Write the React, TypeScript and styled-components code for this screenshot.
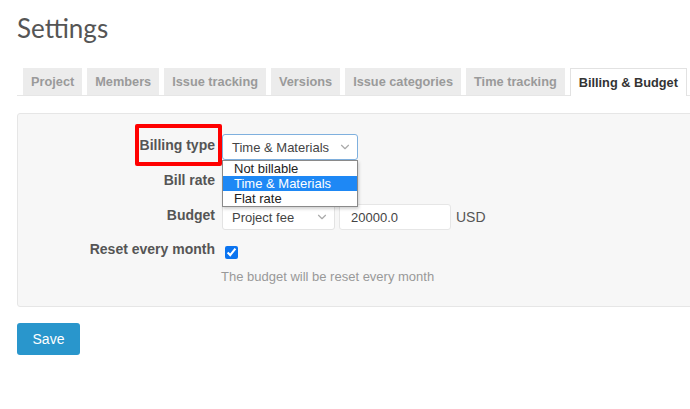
import React from 'react';
import styled, { createGlobalStyle } from 'styled-components';
import { ChevronDown } from 'lucide-react';

const GlobalStyle = createGlobalStyle`
  html, body {
    margin: 0;
    padding: 0;
    overflow: hidden;
    background: #fff;
    font-family: "Liberation Sans", Arial, sans-serif;
  }
`;

const Page = styled.div`
  width: 690px;
  padding-left: 17px;
  box-sizing: border-box;
  overflow: hidden;
`;

const Title = styled.h2`
  margin: 12px 0 24px 0;
  font-family: Lato, "Open Sans", sans-serif;
  font-weight: 400;
  font-size: 26px;
  line-height: 32px;
  color: #555;
`;

const TabBar = styled.ul`
  display: flex;
  align-items: flex-end;
  gap: 5px;
  list-style: none;
  margin: 0 -20px 0 0;
  padding: 0 0 0 6px;
  height: 27px;
  border-bottom: 1px solid #e6e6e6;
`;

const Tab = styled.li<{ $active?: boolean }>`
  flex-shrink: 0;
  box-sizing: border-box;
  height: ${p => (p.$active ? '28px' : '27px')};
  margin-bottom: ${p => (p.$active ? '-1px' : '0')};
  padding: 0 8px;
  line-height: 27px;
  font-size: 12.75px;
  font-weight: 700;
  white-space: nowrap;
  color: ${p => (p.$active ? '#333' : '#9a9a9a')};
  background: ${p => (p.$active ? '#fff' : '#ececec')};
  border: ${p => (p.$active ? '1px solid #e2e2e2' : 'none')};
  border-bottom: none;
`;

const Panel = styled.div`
  margin: 17px -20px 0 0;
  padding: 20px 0 21px 0;
  background: #f7f7f7;
  border: 1px solid #e6e6e6;
  border-radius: 3px;
  display: flex;
  flex-direction: column;
  gap: 9px;
`;

const Row = styled.div<{ $height?: number; $shift?: number }>`
  display: grid;
  grid-template-columns: 197px 1fr;
  column-gap: 7px;
  align-items: center;
  height: ${p => p.$height ?? 26}px;
  margin-top: ${p => p.$shift ?? 0}px;
`;

const Label = styled.label`
  text-align: right;
  font-size: 14px;
  font-weight: 700;
  color: #555;
  padding-bottom: 4px;
  white-space: nowrap;
`;

const Marked = styled.span`
  position: relative;

  &::after {
    content: '';
    position: absolute;
    left: -5px;
    right: -7px;
    top: -13px;
    bottom: -13px;
    border: 4px solid #f00;
    border-radius: 2px;
  }
`;

const Field = styled.div`
  display: flex;
  align-items: center;
  gap: 4px;
  position: relative;
`;

const SelectBox = styled.div<{ $width: number; $focused?: boolean }>`
  position: relative;
  box-sizing: border-box;
  width: ${p => p.$width}px;
  height: 26px;
  display: flex;
  align-items: center;
  justify-content: space-between;
  padding: 0 5px 0 9px;
  background: #fff;
  border: 1px solid ${p => (p.$focused ? '#7fb0de' : '#e3e3e3')};
  border-radius: 3px;
  font-size: 13px;
  color: #444;
`;

const TextInput = styled.div<{ $width: number }>`
  box-sizing: border-box;
  width: ${p => p.$width}px;
  height: 26px;
  display: flex;
  align-items: center;
  padding-left: 11px;
  background: #fff;
  border: 1px solid #e6e6e6;
  border-radius: 3px;
  font-size: 13px;
  color: #444;
`;

const Unit = styled.span`
  margin-left: 1px;
  font-size: 14px;
  color: #555;
`;

const OptionList = styled.ul`
  position: absolute;
  top: calc(100% + 1px);
  left: -1px;
  width: 136px;
  box-sizing: border-box;
  margin: 0;
  padding: 0;
  list-style: none;
  background: #fff;
  border: 1px solid #8a8a8a;
  box-shadow: 1px 2px 3px rgba(0, 0, 0, 0.18);
  z-index: 2;
`;

const Option = styled.li<{ $selected?: boolean }>`
  height: 15px;
  line-height: 15px;
  padding-left: 11px;
  font-size: 13px;
  color: ${p => (p.$selected ? '#fff' : '#222')};
  background: ${p => (p.$selected ? '#1e88f5' : 'transparent')};
`;

const Check = styled.input`
  width: 13px;
  height: 13px;
  margin: 2px 0 0 3px;
  accent-color: #0b74f0;
`;

const Hint = styled.div`
  grid-column: 2;
  margin-left: -1px;
  font-size: 13px;
  line-height: 16px;
  color: #999;
`;

const SaveButton = styled.button`
  margin-top: 16px;
  width: 63px;
  height: 32px;
  border: none;
  border-radius: 3px;
  background: #2996cc;
  color: #fff;
  font-family: "Liberation Sans", Arial, sans-serif;
  font-size: 14px;
`;

const Chevron = () => <ChevronDown size={14} strokeWidth={2} color="#aaa" />;

const tabs = [
  'Project',
  'Members',
  'Issue tracking',
  'Versions',
  'Issue categories',
  'Time tracking',
  'Billing & Budget',
  'Repository',
];

const billingOptions = ['Not billable', 'Time & Materials', 'Flat rate'];

const App: React.FC = () => {
  return (
    <>
      <GlobalStyle />
      <Page>
        <Title>Settings</Title>

        <TabBar>
          {tabs.map(t => (
            <Tab key={t} $active={t === 'Billing & Budget'}>
              {t}
            </Tab>
          ))}
        </TabBar>

        <Panel>
          <Row>
            <Label>
              <Marked>Billing type</Marked>
            </Label>
            <Field>
              <SelectBox $width={136} $focused>
                Time &amp; Materials
                <Chevron />
                <OptionList>
                  {billingOptions.map(o => (
                    <Option key={o} $selected={o === 'Time & Materials'}>
                      {o}
                    </Option>
                  ))}
                </OptionList>
              </SelectBox>
            </Field>
          </Row>

          <Row>
            <Label>Bill rate</Label>
            <Field>
              <TextInput $width={113} />
            </Field>
          </Row>

          <Row>
            <Label>Budget</Label>
            <Field>
              <SelectBox $width={113}>
                Project fee
                <Chevron />
              </SelectBox>
              <TextInput $width={112}>20000.0</TextInput>
              <Unit>USD</Unit>
            </Field>
          </Row>

          <Row $height={24}>
            <Label>Reset every month</Label>
            <Field>
              <Check type="checkbox" defaultChecked />
            </Field>
          </Row>

          <Row $height={16} $shift={-3}>
            <Hint>The budget will be reset every month</Hint>
          </Row>
        </Panel>

        <SaveButton>Save</SaveButton>
      </Page>
    </>
  );
};

export default App;
